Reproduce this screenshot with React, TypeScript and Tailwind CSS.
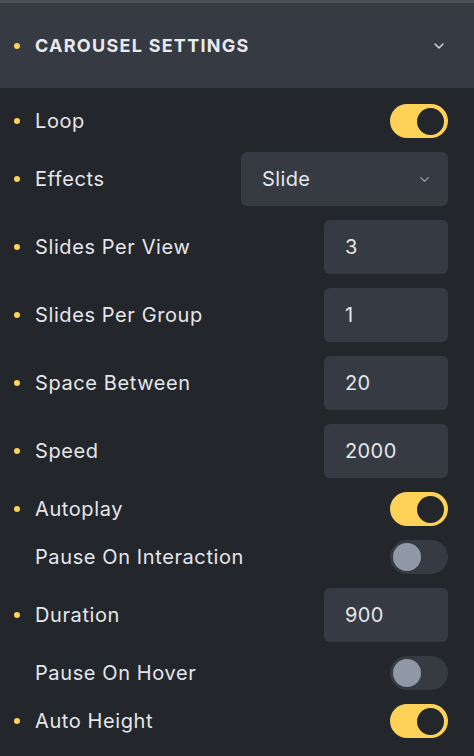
import { ChevronDown } from 'lucide-react';

type Row =
  | { label: string; dot: boolean; kind: 'toggle'; on: boolean }
  | { label: string; dot: boolean; kind: 'input'; value: string }
  | { label: string; dot: boolean; kind: 'select'; value: string };

const rows: Row[] = [
  { label: 'Loop', dot: true, kind: 'toggle', on: true },
  { label: 'Effects', dot: true, kind: 'select', value: 'Slide' },
  { label: 'Slides Per View', dot: true, kind: 'input', value: '3' },
  { label: 'Slides Per Group', dot: true, kind: 'input', value: '1' },
  { label: 'Space Between', dot: true, kind: 'input', value: '20' },
  { label: 'Speed', dot: true, kind: 'input', value: '2000' },
  { label: 'Autoplay', dot: true, kind: 'toggle', on: true },
  { label: 'Pause On Interaction', dot: false, kind: 'toggle', on: false },
  { label: 'Duration', dot: true, kind: 'input', value: '900' },
  { label: 'Pause On Hover', dot: false, kind: 'toggle', on: false },
  { label: 'Auto Height', dot: true, kind: 'toggle', on: true },
];

function Toggle({ on }: { on: boolean }) {
  return on ? (
    <div className="w-[58px] h-[34px] rounded-full bg-[#fdd257] flex items-center justify-end pr-[4px]">
      <div className="w-[27px] h-[27px] rounded-full bg-[#23262b]" />
    </div>
  ) : (
    <div className="w-[58px] h-[34px] rounded-full bg-[#363a42] flex items-center pl-[3px]">
      <div className="w-[28px] h-[28px] rounded-full bg-[#8f98a4]" />
    </div>
  );
}

export default function App() {
  return (
    <div className="w-[474px] h-[756px] bg-[#23262b] overflow-hidden font-['Inter',sans-serif]">
      <div className="h-[3px] bg-[#4a4e55]" />
      <div className="h-[85px] bg-[#363a42] flex items-center pl-[14px] pr-[27px]">
        <span className="w-[6px] h-[6px] rounded-full bg-[#fdd257] mr-[15px]" />
        <h1 className="flex-1 text-[18px] font-bold tracking-[0.07em] text-[#e8eaed] uppercase">Carousel Settings</h1>
        <ChevronDown className="w-[16px] h-[16px] text-[#d1d5db]" strokeWidth={2.2} />
      </div>
      <div className="flex flex-col gap-[14px] pt-4 pl-[14px] pr-[26px]">
        {rows.map(row => (
          <div key={row.label} className="flex items-center">
            <span className={`w-[6px] h-[6px] rounded-full mr-[15px] shrink-0 ${row.dot ? 'bg-[#fdd257]' : 'bg-transparent'}`} />
            <span className="flex-1 text-[20px] text-[#e4e6ea] tracking-[0.03em]">{row.label}</span>
            {row.kind === 'toggle' && <Toggle on={row.on} />}
            {row.kind === 'input' && (
              <div className="w-[124px] h-[54px] rounded-[6px] bg-[#363a42] flex items-center pl-[21px] text-[20px] text-[#e4e6ea] tracking-[0.02em]">
                {row.value}
              </div>
            )}
            {row.kind === 'select' && (
              <div className="w-[207px] h-[54px] rounded-[6px] bg-[#363a42] flex items-center pl-[21px] pr-[16px] text-[20px] text-[#e4e6ea] tracking-[0.02em]">
                <span className="flex-1">{row.value}</span>
                <ChevronDown className="w-[15px] h-[15px] text-[#9ca3af]" strokeWidth={2} />
              </div>
            )}
          </div>
        ))}
      </div>
    </div>
  );
}
